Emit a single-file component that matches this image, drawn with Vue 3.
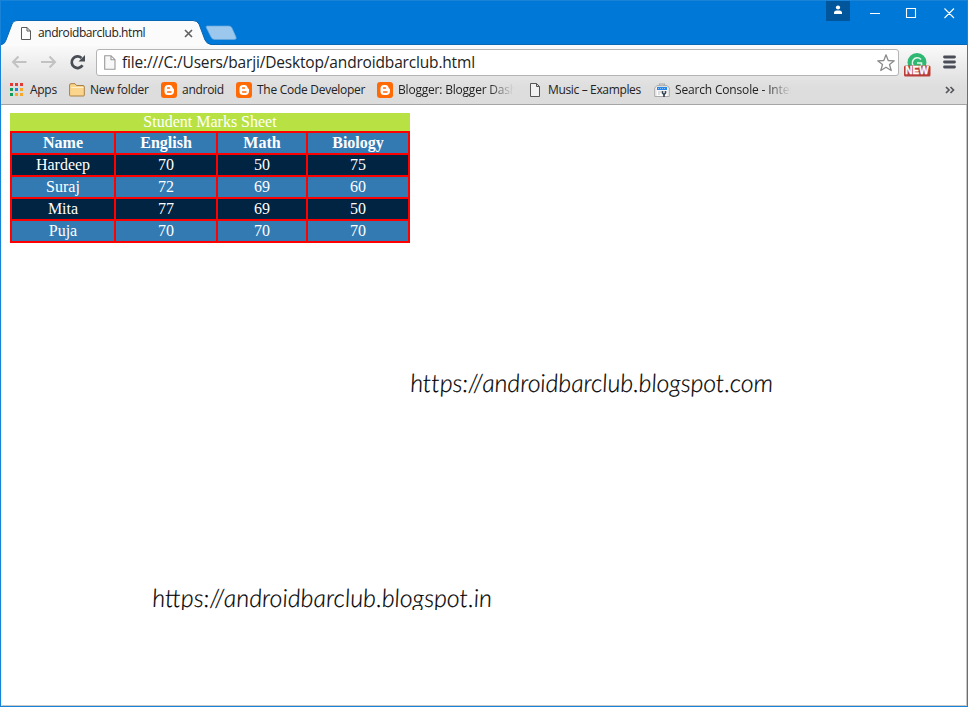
<script setup>
const apps = ['#e53935', '#e53935', '#e53935', '#0f9d58', '#1e88e5', '#f9a825', '#0f9d58', '#f9a825', '#f9a825']
const bookmarks = [
  { name: 'Apps', icon: 'apps', cls: 'b-apps' },
  { name: 'New folder', icon: 'folder', cls: 'b-folder' },
  { name: 'android', icon: 'blogger', cls: 'b-android' },
  { name: 'The Code Developer', icon: 'blogger', cls: 'b-code' },
  { name: 'Blogger: Blogger Dash', icon: 'blogger', cls: 'b-blogger fade' },
  { name: 'Music – Examples', icon: 'page', cls: 'b-music' },
  { name: 'Search Console - Inter', icon: 'console', cls: 'b-console fade' },
]
const heads = ['Name', 'English', 'Math', 'Biology']
const rows = [
  ['Hardeep', 70, 50, 75],
  ['Suraj', 72, 69, 60],
  ['Mita', 77, 69, 50],
  ['Puja', 70, 70, 70],
]
</script>

<template>
  <div class="window">
    <header class="titlebar">
      <div class="tab">
        <svg class="tab-shape" width="240" height="26" viewBox="0 0 240 26">
          <path d="M206 6H228Q230 6 231 8L235 17Q236 19.500 233 19.500H214Q211 19.500 210 17L205.500 8Q204.500 6 206 6Z" fill="#9cc8ed" stroke="#69a8dc" stroke-width=".7" />
          <path d="M0 25C4 24 4 22 5 20L11 4Q12 .5 16 .5H192Q196 .5 198 4L204 20Q206 24 210 24.5V26H0Z" fill="#fbfbfb" />
          <path d="M0 24.5C4 23.5 4 22 5 20L11 4Q12 .5 16 .5H192Q196 .5 198 4L204 20Q206 24 210 24.5" fill="none" stroke="#0866b4" />
        </svg>
        <svg class="tab-page" width="12" height="15" viewBox="0 0 12 15"><path d="M1.500 1.500H7L10.500 5V13.500H1.500ZM7 1.500V5H10.500" fill="#fff" stroke="#5a5a5a" /></svg>
        <span class="tab-title">androidbarclub.html</span>
        <svg class="tab-close" width="9" height="9" viewBox="0 0 9 9"><path d="M1 1L8 8M8 1L1 8" stroke="#606060" stroke-width="1.6" /></svg>
      </div>
      <div class="controls">
        <div class="user">
          <svg width="24" height="20" viewBox="0 0 24 20"><circle cx="12" cy="6.500" r="2.100" fill="#fff" /><path d="M8 13V12Q8 9.500 10.500 9.500H13.500Q16 9.500 16 12V13Z" fill="#fff" /></svg>
        </div>
        <svg class="wincontrols" width="100" height="24" viewBox="0 0 100 24"><path d="M5 12.5H15M41.5 7.5H50.5V16.5H41.5ZM79.5 7.5L89 17M89 7.5L79.5 17" fill="none" stroke="#fff" stroke-width="1.1" /></svg>
      </div>
    </header>

    <section class="chrome">
      <div class="toolbar">
        <svg class="nav" width="84" height="22" viewBox="0 0 84 22">
          <path d="M25.500 11H12M17.5 5.5L12 11L17.5 16.500M40 11H54M48.500 5.500L54 11L48.500 16.500" fill="none" stroke="#c2c2c2" stroke-width="2" />
          <path d="M81.500 14.200A5.800 5.800 0 1 1 80.500 7" fill="none" stroke="#484c54" stroke-width="2.700" />
          <path d="M84 4V10.500H77.500Z" fill="#484c54" />
        </svg>
        <div class="omnibox">
          <svg width="12" height="15" viewBox="0 0 12 15"><path d="M.7.7H7L11 4.700V14.300H.7ZM7 .7V4.700H11" fill="#f8f8f8" stroke="#999" stroke-width="1.1" /></svg>
          <span class="url">file:///C:/Users/barji/Desktop/androidbarclub.html</span>
          <svg class="star" width="20" height="20" viewBox="0 0 20 20"><path d="M10 1.800L12.200 7.500L18.300 7.800L13.500 11.500L15.200 17.500L10 14.200L4.800 17.500L6.500 11.500L1.700 7.800L7.800 7.500Z" fill="#fff" stroke="#8b8b8b" stroke-width="1.3" stroke-linejoin="round" /></svg>
        </div>
        <div class="ext">
          <svg width="28" height="26" viewBox="0 0 28 26"><circle cx="13" cy="10.500" r="9.500" fill="#2eb872" /><path d="M17 7.500A5 5 0 1 0 18 12.500M13 11H17.500V14" fill="none" stroke="#e5f6ec" stroke-width="1.500" /><rect x="0" y="13.500" width="26.500" height="11" rx="1.500" fill="#b93c39" /></svg>
          <span class="new">NEW</span>
        </div>
        <svg class="menu" width="14" height="14" viewBox="0 0 14 14"><path d="M2.500 2H12.500M2.500 7H12.500M2.500 12H12.500" stroke="#4a4d57" stroke-width="2.800" stroke-linecap="round" /></svg>
      </div>

      <nav class="bookmarks">
        <div v-for="b in bookmarks" :key="b.name" class="bookmark" :class="b.cls">
          <svg v-if="b.icon === 'apps'" width="14" height="14" viewBox="0 0 14 14">
            <rect v-for="(c, i) in apps" :key="i" :x="(i % 3) * 5" :y="Math.floor(i / 3) * 5" width="3" height="3" :fill="c" />
          </svg>
          <svg v-else-if="b.icon === 'folder'" width="16" height="14" viewBox="0 0 16 14"><path d="M.6 12V2Q.6 .7 2 .7H6L7.500 2.500H14Q15.300 2.500 15.300 4V12Q15.300 13 14.500 13H1.600Q.6 13 .6 12Z" fill="#fbd58b" stroke="#a98147" /><path d="M2 4.500H14.500" stroke="#fff0c9" /></svg>
          <svg v-else-if="b.icon === 'blogger'" width="16" height="16" viewBox="0 0 16 16"><rect width="16" height="16" rx="3" fill="#ff6a05" /><path d="M7 3H8.800Q11.300 3 11.600 5.500Q11.600 6.600 12.500 6.700Q13 6.800 13 7.500V9.300Q13 13 9.200 13H7Q3.500 13 3.500 9.500V6.500Q3.500 3 7 3Z" fill="#fff" /><path d="M6.600 6H8.500M6.600 10H10" stroke="#ff6a05" stroke-width="1.400" stroke-linecap="round" /></svg>
          <svg v-else-if="b.icon === 'page'" width="11" height="15" viewBox="0 0 11 15"><path d="M.5.5H6.500L9.500 3.500V13.500H.5ZM6.500 .5V3.500H9.500" fill="#f1f1f1" stroke="#555" /></svg>
          <svg v-else width="16" height="15" viewBox="0 0 16 15"><path d="M5.500 3V1H10.500V3" fill="none" stroke="#aaa" stroke-width="1.200" /><path d="M.7 5L2.700 2.700H13.300L15.300 5V13.500H.7Z" fill="#eee" stroke="#aaa" /><path d="M3 4H13V7H3Z" fill="#2886e9" /><path d="M4 5.500H12" stroke="#8cc2f8" stroke-dasharray="1 1" /><path d="M3 7.500H13V13H3Z" fill="#fff" /><path d="M4 9H7M4 11H6" stroke="#bbb" /><path d="M8.500 8V10L10 11.500L11.500 10V8M10 11V14" fill="none" stroke="#39465a" stroke-width="1.700" /></svg>
          <span>{{ b.name }}</span>
        </div>
        <svg class="more" width="10" height="8" viewBox="0 0 10 8"><path d="M1 1L4 4L1 7M5.500 1L8.500 4L5.500 7" fill="none" stroke="#55565b" stroke-width="1.700" /></svg>
      </nav>
    </section>

    <main class="page">
      <table class="marks">
        <caption>Student Marks Sheet</caption>
        <colgroup><col class="c1"><col class="c2"><col class="c3"><col class="c4"></colgroup>
        <thead><tr><th v-for="h in heads" :key="h">{{ h }}</th></tr></thead>
        <tbody>
          <tr v-for="r in rows" :key="r[0]"><td v-for="(v, i) in r" :key="i">{{ v }}</td></tr>
        </tbody>
      </table>
      <p class="link link-com"><span>https://androidbarclub.blogspot.com</span></p>
      <p class="link link-in"><span>https://androidbarclub.blogspot.in</span></p>
    </main>
  </div>
</template>

<style>
body { margin: 0; overflow: hidden; background: #fff; }
</style>

<style scoped>
* { box-sizing: border-box; }
svg { display: block; flex: none; }
.window { width: 968px; height: 707px; border: 1px solid #1883d7; display: flex; flex-direction: column; background: #fff; font-family: "Open Sans", "Noto Sans", sans-serif; color: #222; overflow: hidden; }
.titlebar { height: 44px; flex: none; background: #0078d7; border-bottom: 1px solid #0866b4; display: flex; justify-content: space-between; align-items: flex-start; }
.tab { position: relative; display: flex; align-items: center; width: 240px; height: 26px; margin-top: 19px; padding-left: 19px; }
.tab-shape { position: absolute; left: 0; top: 0; }
.tab-page, .tab-title, .tab-close { position: relative; }
.tab-title { width: 112px; margin-left: 6px; margin-right: 34px; margin-top: -1px; font-size: 12px; letter-spacing: -.42px; white-space: nowrap; }
.controls { display: flex; }
.user { width: 24px; height: 20px; background: #00559b; }
.wincontrols { margin-left: 15px; margin-right: 2px; }
.chrome { height: 60px; flex: none; background: linear-gradient(#fafafa, #dedede 70%, #dcdcdc); border-bottom: 1px solid #a5a5a5; }
.toolbar { display: flex; align-items: flex-start; height: 31px; padding-top: 4px; }
.nav { margin-top: 2px; }
.omnibox { width: 803px; height: 27px; margin-left: 11px; border: 1px solid #b4b4b4; border-radius: 3px; background: #fff; display: flex; align-items: center; padding: 0 2px 0 7px; }
.url { margin-left: 6px; margin-top: -2px; font-size: 15.5px; letter-spacing: -.17px; white-space: nowrap; line-height: 24px; }
.star { margin-left: auto; }
.ext { position: relative; width: 28px; margin-left: 5px; margin-top: 3px; }
.new { position: absolute; left: 0; top: 13px; width: 26px; text-align: center; color: #fff; font: bold 10px/12px "Liberation Sans", sans-serif; -webkit-text-stroke: .3px #fff; }
.menu { margin-left: 10px; margin-top: 6px; }
.bookmarks { display: flex; align-items: center; height: 28px; padding-left: 9px; }
.bookmark { display: flex; align-items: center; font-size: 12px; line-height: 18px; white-space: nowrap; flex: none; letter-spacing: -.28px; }
.b-apps { width: 59px; gap: 6px; }
.b-folder { width: 92px; gap: 5px; }
.b-android { width: 75px; gap: 5px; }
.b-code { width: 141px; gap: 5px; }
.b-blogger { width: 137px; gap: 5px; margin-right: 16px; letter-spacing: -.2px; }
.b-music { width: 124px; gap: 7px; letter-spacing: -.35px; }
.b-console { width: 137px; gap: 5px; letter-spacing: -.17px; }
.fade { -webkit-mask-image: linear-gradient(90deg, #000 calc(100% - 25px), transparent); mask-image: linear-gradient(90deg, #000 calc(100% - 25px), transparent); }
.more { margin-left: auto; margin-right: 12px; }
.page { flex: 1; min-height: 0; border: solid #c7c7c7; border-width: 0 1px 1px; border-left-color: #eee; padding: 8px; }
.marks { width: 400px; table-layout: fixed; border-collapse: collapse; font: 16px/18px "Liberation Serif", serif; color: #fff; text-align: center; }
.marks caption { height: 18px; background: #b8e244; }
.marks th, .marks td { height: 22px; padding: 1px; border: 2px solid #f00; }
.marks tr { background: #337ab2; }
.marks tbody tr:nth-child(odd) { background: #002442; }
.c1 { width: 104px; } .c2 { width: 102px; } .c3 { width: 90px; } .c4 { width: 102px; }
.link { margin: 0; font-family: Lato, sans-serif; font-style: italic; font-weight: 300; font-size: 25px; line-height: 36px; color: #000; white-space: nowrap; overflow: hidden; -webkit-text-stroke: .2px #000; }
.link span { display: inline-block; transform: skewX(4deg); }
.link-com { margin-top: 121px; margin-left: 400px; letter-spacing: -.1px; }
.link-in { height: 31px; margin-top: 179px; margin-left: 142px; letter-spacing: 0; }
</style>
